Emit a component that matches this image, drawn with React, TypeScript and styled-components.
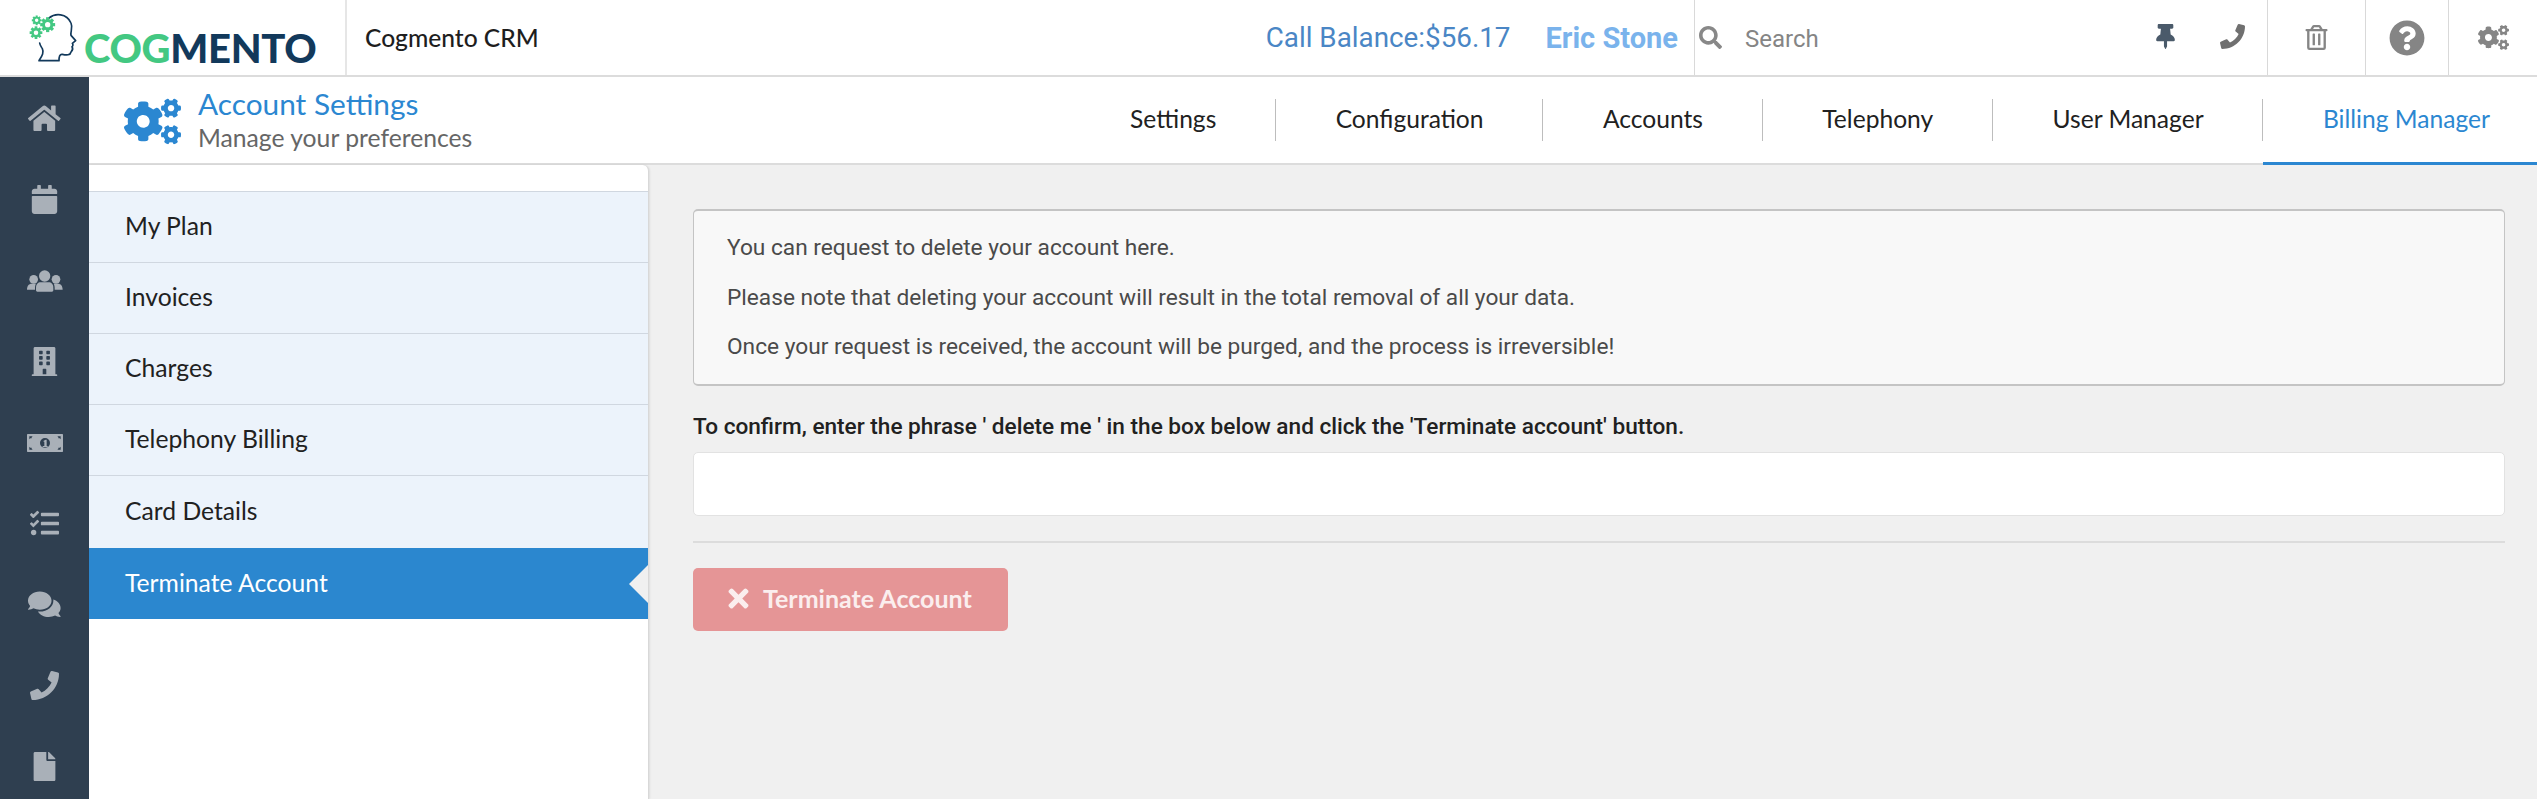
import React from "react";
import styled, { createGlobalStyle } from "styled-components";
import {
  FaHome, FaCalendar, FaBuilding, FaTasks, FaComments, FaPhone, FaFile,
  FaCogs, FaThumbtack, FaRegTrashAlt, FaQuestionCircle, FaSearch, FaTimes,
} from "react-icons/fa";

const Global = createGlobalStyle`
  * { box-sizing: border-box; }
  html, body { margin: 0; padding: 0; height: 100%; overflow: hidden; background: #f0f0f0; }
  body { font-family: Lato, "Liberation Sans", sans-serif; color: #212121; }
`;

const Page = styled.div`
  height: 799px;
  display: flex;
  flex-direction: column;
`;

const TopBar = styled.header`
  height: 77px;
  flex: none;
  display: flex;
  align-items: stretch;
  background: #fff;
  border-bottom: 2px solid #dcdcdc;
  position: relative;
  z-index: 2;
`;

const LogoCell = styled.div`
  width: 347px;
  flex: none;
  display: flex;
  align-items: flex-start;
  padding: 8px 0 0 25px;
  border-right: 2px solid #e6e6e6;
`;

const LogoWord = styled.div`
  font-family: Lato, sans-serif;
  font-weight: 900;
  font-size: 40px;
  line-height: 46px;
  margin: 17px 0 0 -1px;
  letter-spacing: -0.3px;
  color: #12395b;
  white-space: nowrap;
`;

const LogoGreen = styled.span`
  color: #43c882;
`;

const AppName = styled.div`
  font-size: 24.6px;
  font-weight: 500;
  color: #1e1e1e;
  align-self: center;
  margin-left: 18px;
  white-space: nowrap;
`;

const Spacer = styled.div`
  flex: 1;
`;

const Balance = styled.div`
  font-family: Roboto, sans-serif;
  font-size: 27.8px;
  color: #4a86c5;
  align-self: center;
  white-space: nowrap;
  margin-right: 35px;
`;

const UserName = styled.div`
  font-family: Roboto, sans-serif;
  font-size: 29px;
  font-weight: 700;
  color: #7ab3ec;
  align-self: center;
  white-space: nowrap;
  margin-right: 16px;
`;

const SearchCell = styled.div`
  width: 574px;
  flex: none;
  display: flex;
  align-items: center;
  border-left: 1px solid #d9d9d9;
  border-right: 1px solid #d9d9d9;
  padding-left: 4px;
  color: #888;
`;

const SearchText = styled.span`
  font-family: Roboto, sans-serif;
  font-size: 24px;
  color: #858585;
  margin: 2px 0 0 23px;
`;

const QuickIcon = styled.span<{ $color: string; $left: number }>`
  display: inline-flex;
  color: ${(p) => p.$color};
  font-size: 25px;
  margin-left: ${(p) => p.$left}px;
  margin-top: -3px;
`;

const ActionCell = styled.div<{ $w: number; $size: number; $last?: boolean }>`
  width: ${(p) => p.$w}px;
  flex: none;
  display: flex;
  align-items: center;
  justify-content: center;
  color: #858585;
  font-size: ${(p) => p.$size}px;
  border-right: ${(p) => (p.$last ? "none" : "1px solid #d9d9d9")};
`;

const Body = styled.div`
  flex: 1;
  min-height: 0;
  display: flex;
`;

const SideRail = styled.nav`
  width: 89px;
  flex: none;
  background: #2f3f50;
  display: flex;
  flex-direction: column;
  align-items: center;
  padding-top: 1px;
  overflow: hidden;
`;

const RailItem = styled.div<{ $size: number }>`
  height: 81px;
  flex: none;
  display: flex;
  align-items: center;
  justify-content: center;
  font-size: ${(p) => p.$size}px;
  color: #a9b0b8;
`;

const Main = styled.div`
  flex: 1;
  min-width: 0;
  display: flex;
  flex-direction: column;
`;

const SubHeader = styled.div`
  height: 88px;
  flex: none;
  display: flex;
  background: #fff;
  border-bottom: 2px solid #dcdcdc;
`;

const TitleBlock = styled.div`
  display: flex;
  align-items: center;
  padding-left: 35px;
  flex: 1;
`;

const TitleIcon = styled.span`
  display: inline-flex;
  font-size: 57px;
  color: #2b87d1;
  margin: 3px 17px 0 0;
`;

const TitleText = styled.div`
  display: flex;
  flex-direction: column;
`;

const Title = styled.div`
  font-size: 29.8px;
  line-height: 34px;
  color: #2b87d1;
  margin-top: -2px;
`;

const Subtitle = styled.div`
  font-size: 24.7px;
  line-height: 28px;
  color: #666;
  margin-top: 3px;
`;

const Tabs = styled.div`
  display: flex;
  align-items: center;
  height: 86px;
`;

const Tab = styled.div<{ $active?: boolean; $last?: boolean }>`
  height: 100%;
  display: flex;
  align-items: center;
  position: relative;
  padding: 0 ${(p) => (p.$last ? 47 : 59.7)}px 4px 59.7px;
  font-size: 24.6px;
  white-space: nowrap;
  color: ${(p) => (p.$active ? "#2b87d1" : "#212121")};

  &::after {
    content: "";
    display: ${(p) => (p.$last ? "none" : "block")};
    position: absolute;
    right: 0;
    top: 22px;
    height: 42px;
    width: 1px;
    background: #bdbdbd;
  }

  &::before {
    content: "";
    display: ${(p) => (p.$active ? "block" : "none")};
    position: absolute;
    left: 0;
    right: 0;
    bottom: -2px;
    height: 3px;
    background: #2b87d1;
  }
`;

const Columns = styled.div`
  flex: 1;
  min-height: 0;
  display: flex;
  background: #f0f0f0;
`;

const Menu = styled.aside`
  width: 560px;
  flex: none;
  background: #fff;
  border-right: 1px solid #d8d8d8;
  border-top-right-radius: 6px;
  padding-top: 26px;
  box-shadow: 1px 0 2px rgba(0, 0, 0, 0.08);
`;

const MenuItem = styled.div<{ $active?: boolean; $tall?: boolean }>`
  height: ${(p) => (p.$tall ? 73 : 71)}px;
  display: flex;
  align-items: center;
  padding: 0 0 3px 36px;
  font-size: 24.7px;
  position: relative;
  background: ${(p) => (p.$active ? "#2b87cf" : "#ecf3fb")};
  color: ${(p) => (p.$active ? "#fff" : "#212121")};
  border-top: 1px solid ${(p) => (p.$active ? "#2b87cf" : "#d0d7e0")};

  &::after {
    content: "";
    display: ${(p) => (p.$active ? "block" : "none")};
    position: absolute;
    right: 0;
    top: 50%;
    margin-top: -19px;
    border-style: solid;
    border-width: 19px 19px 19px 0;
    border-color: transparent #f0f0f0 transparent transparent;
  }
`;

const Content = styled.section`
  flex: 1;
  min-width: 0;
  padding: 44px 32px 0 44px;
  font-family: Roboto, sans-serif;
`;

const Notice = styled.div`
  height: 177px;
  background: #f8f8f8;
  border: 1px solid #c4c4c4;
  border-bottom-width: 2px;
  border-top-width: 2px;
  border-radius: 5px;
  padding: 24px 33px;
`;

const NoticeLine = styled.p`
  margin: 0 0 23.5px;
  font-size: 22.7px;
  line-height: 26px;
  color: #4a4a4a;
`;

const ConfirmLabel = styled.label`
  display: block;
  margin-top: 28px;
  font-size: 22.6px;
  line-height: 26px;
  font-weight: 500;
  color: #212121;
`;

const ConfirmInput = styled.input`
  display: block;
  width: 100%;
  height: 64px;
  margin-top: 12px;
  background: #fff;
  border: 1px solid #e2e2e2;
  border-radius: 5px;
  outline: none;
`;

const Rule = styled.hr`
  margin: 25px 0 25px;
  border: 0;
  border-top: 2px solid #dcdcdc;
`;

const DangerButton = styled.button`
  width: 315px;
  height: 63px;
  display: flex;
  align-items: center;
  padding: 0 0 3px 31px;
  background: #e59596;
  border: 0;
  border-radius: 5px;
  color: #fbeeee;
  font-family: Lato, sans-serif;
  font-size: 25px;
  font-weight: 700;
`;

const ButtonIcon = styled.span`
  display: inline-flex;
  font-size: 29px;
  margin-right: 10px;
`;

const Gear = ({ cx, cy, r }: { cx: number; cy: number; r: number }) => (
  <g fill="#43c882">
    {[0, 45, 90, 135, 180, 225, 270, 315].map((a) => (
      <rect
        key={a}
        x={cx - r * 0.24}
        y={cy - r * 1.12}
        width={r * 0.48}
        height={r * 0.5}
        transform={`rotate(${a} ${cx} ${cy})`}
      />
    ))}
    <circle cx={cx} cy={cy} r={r * 0.62} fill="none" stroke="#43c882" strokeWidth={r * 0.44} />
  </g>
);

const HeadLogo = () => (
  <svg width="60" height="60" viewBox="0 0 180 180" fill="none">
    <path
      d="M72 30C90 15 125 15 138 45C145 60 135 72 138 82L152 98L142 106C145 110 144 114 141 116C145 122 142 128 138 132C136 142 125 142 112 139C104 138 102 146 102 158L42 158C50 145 58 135 52 122C48 115 45 112 44 105"
      stroke="#12395b"
      strokeWidth="5"
      strokeLinejoin="round"
      strokeLinecap="round"
    />
    <Gear cx={68} cy={50} r={20} />
    <Gear cx={35} cy={37} r={13} />
    <Gear cx={33} cy={74} r={17} />
  </svg>
);

const UsersIcon = () => (
  <svg width="36" height="22" viewBox="0 0 108 64" fill="currentColor">
    <circle cx="53" cy="17" r="17" />
    <circle cx="20" cy="27" r="13" />
    <circle cx="87" cy="27" r="13" />
    <path d="M0 58c0-12 6-18 14-18h13c-2 3-3 8-3 13v5z" />
    <path d="M107 58c0-12-6-18-14-18H80c2 3 3 8 3 13v5z" />
    <path d="M27 60V52c0-10 6-16 14-16h24c8 0 14 6 14 16v8c0 2-2 4-4 4H31c-2 0-4-2-4-4z" />
  </svg>
);

const BillIcon = () => (
  <svg width="36" height="18" viewBox="0 0 108 54" fill="currentColor">
    <path
      fillRule="evenodd"
      d="M2 0h104a2 2 0 0 1 2 2v50a2 2 0 0 1-2 2H2a2 2 0 0 1-2-2V2a2 2 0 0 1 2-2zM7 7v9l3-3 4 0 0-3 3-3zM101 7h-10l3 3 0 3 4 0 3 3zM7 47h10l-3-3 0-3-4 0-3-3zM101 47v-9l-3 3-4 0 0 3-3 3zM54 12a15 15 0 1 0 0 30a15 15 0 1 0 0-30z"
    />
    <path d="M50 20l6-3h3v19h3v4H47v-4h5V23l-2 1z" />
  </svg>
);

const railIcons = [
  { node: <FaHome />, size: 32.6 },
  { node: <FaCalendar />, size: 29 },
  { node: <UsersIcon />, size: 36 },
  { node: <FaBuilding />, size: 29 },
  { node: <BillIcon />, size: 36 },
  { node: <FaTasks />, size: 29 },
  { node: <FaComments />, size: 32.6 },
  { node: <FaPhone />, size: 29 },
  { node: <FaFile />, size: 29 },
];
const tabs = ["Settings", "Configuration", "Accounts", "Telephony", "User Manager", "Billing Manager"];
const menu = ["My Plan", "Invoices", "Charges", "Telephony Billing", "Card Details", "Terminate Account"];
const notices = [
  "You can request to delete your account here.",
  "Please note that deleting your account will result in the total removal of all your data.",
  "Once your request is received, the account will be purged, and the process is irreversible!",
];

export default function App() {
  return (
    <Page>
      <Global />
      <TopBar>
        <LogoCell>
          <HeadLogo />
          <LogoWord>
            <LogoGreen>COG</LogoGreen>MENTO
          </LogoWord>
        </LogoCell>
        <AppName>Cogmento CRM</AppName>
        <Spacer />
        <Balance>Call Balance:$56.17</Balance>
        <UserName>Eric Stone</UserName>
        <SearchCell>
          <FaSearch size={23} />
          <SearchText>Search</SearchText>
          <Spacer />
          <QuickIcon $color="#4a5a6a" $left={0}>
            <FaThumbtack />
          </QuickIcon>
          <QuickIcon $color="#707070" $left={42}>
            <FaPhone />
          </QuickIcon>
          <QuickIcon $color="transparent" $left={22} />
        </SearchCell>
        <ActionCell $w={98} $size={25}>
          <FaRegTrashAlt />
        </ActionCell>
        <ActionCell $w={83} $size={36}>
          <FaQuestionCircle />
        </ActionCell>
        <ActionCell $w={88} $size={31} $last>
          <FaCogs />
        </ActionCell>
      </TopBar>
      <Body>
        <SideRail>
          {railIcons.map(({ node, size }, i) => (
            <RailItem key={i} $size={size}>
              {node}
            </RailItem>
          ))}
        </SideRail>
        <Main>
          <SubHeader>
            <TitleBlock>
              <TitleIcon>
                <FaCogs />
              </TitleIcon>
              <TitleText>
                <Title>Account Settings</Title>
                <Subtitle>Manage your preferences</Subtitle>
              </TitleText>
            </TitleBlock>
            <Tabs>
              {tabs.map((t, i) => (
                <Tab key={t} $active={i === 5} $last={i === 5}>
                  {t}
                </Tab>
              ))}
            </Tabs>
          </SubHeader>
          <Columns>
            <Menu>
              {menu.map((m, i) => (
                <MenuItem key={m} $active={i === 5} $tall={i === 4}>
                  {m}
                </MenuItem>
              ))}
            </Menu>
            <Content>
              <Notice>
                {notices.map((n) => (
                  <NoticeLine key={n}>{n}</NoticeLine>
                ))}
              </Notice>
              <ConfirmLabel>
                To confirm, enter the phrase ' delete me ' in the box below and click the 'Terminate account' button.
              </ConfirmLabel>
              <ConfirmInput />
              <Rule />
              <DangerButton>
                <ButtonIcon>
                  <FaTimes />
                </ButtonIcon>
                Terminate Account
              </DangerButton>
            </Content>
          </Columns>
        </Main>
      </Body>
    </Page>
  );
}
